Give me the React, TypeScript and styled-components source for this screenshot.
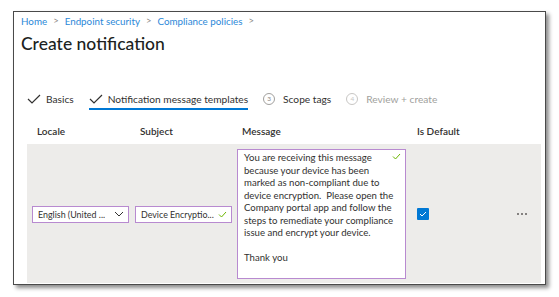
import React from 'react';
import styled, { createGlobalStyle } from 'styled-components';

const GlobalStyle = createGlobalStyle`
  body {
    margin: 0;
    background: #ffffff;
    font-family: Lato, 'Open Sans', sans-serif;
    color: #323130;
  }
`;

const Page = styled.div`
  width: 559px;
  height: 297px;
  padding: 11px 0 0 13px;
  box-sizing: border-box;
`;

const Frame = styled.div`
  width: 533px;
  height: 274px;
  box-sizing: border-box;
  border: 1.5px solid #4a4a4a;
  box-shadow: 3px 3px 4px rgba(0, 0, 0, 0.45);
  background: #ffffff;
  padding: 2px 4px 0 0;
  display: flex;
  flex-direction: column;
`;

const Breadcrumb = styled.div`
  display: flex;
  align-items: center;
  gap: 6px;
  padding-left: 7px;
  font-size: 9.8px;
  line-height: 14px;
`;

const Crumb = styled.span`
  color: #2b88d8;
`;

const Sep = styled.span`
  color: #8a8886;
  font-size: 9.5px;
`;

const Title = styled.h1`
  margin: 4px 0 0 7px;
  font-size: 17.5px;
  line-height: 24px;
  font-weight: 500;
  color: #201f1e;
`;

const Tabs = styled.div`
  display: flex;
  align-items: flex-start;
  margin: 35px 0 0 13px;
`;

const Tab = styled.div<{ $active?: boolean; $muted?: boolean }>`
  display: flex;
  align-items: center;
  gap: 5px;
  margin-right: 15px;
  font-size: 10.2px;
  line-height: 16px;
  padding-bottom: 1px;
  border-bottom: 2px solid ${({ $active }) => ($active ? '#0078d4' : 'transparent')};
  color: ${({ $muted }) => ($muted ? '#a19f9d' : '#323130')};
`;

const StepNum = styled.span<{ $muted?: boolean }>`
  width: 10px;
  height: 10px;
  border-radius: 50%;
  border: 1px solid ${({ $muted }) => ($muted ? '#c8c6c4' : '#a19f9d')};
  color: ${({ $muted }) => ($muted ? '#c8c6c4' : '#8a8886')};
  font-size: 6.5px;
  line-height: 10px;
  text-align: center;
  margin-right: 3px;
`;

const Grid = styled.div`
  display: grid;
  grid-template-columns: 103px 102px 180px 1fr 24px;
  margin-left: 13px;
  padding-left: 5px;
`;

const HeadRow = styled(Grid)`
  margin-top: 14px;
  padding-bottom: 6px;
`;

const HeadCell = styled.div<{ $flush?: boolean }>`
  font-size: 10px;
  line-height: 14px;
  font-weight: 600;
  color: #323130;
  padding-left: ${({ $flush }) => ($flush ? '0' : '5px')};
`;

const DataRow = styled(Grid)`
  background: #edecea;
  align-items: center;
  padding-top: 5px;
  padding-bottom: 4px;
`;

const Field = styled.div`
  width: 97px;
  height: 17px;
  box-sizing: border-box;
  border: 1.5px solid #b88ad0;
  background: #ffffff;
  display: flex;
  align-items: center;
  justify-content: space-between;
  gap: 2px;
  padding: 0 4px 0 5px;
  font-size: 8.9px;
  color: #323130;
  white-space: nowrap;

  svg {
    flex-shrink: 0;
  }
`;

const FieldText = styled.span`
  overflow: hidden;
`;

const MessageBox = styled.div`
  position: relative;
  width: 169px;
  height: 130px;
  box-sizing: border-box;
  border: 1.5px solid #b88ad0;
  background: #ffffff;
  padding: 2px 6px 0 6px;
  font-size: 9.6px;
  line-height: 12.5px;
  color: #323130;
  white-space: pre-wrap;
`;

const BoxCheck = styled.span`
  position: absolute;
  top: 3px;
  right: 4px;
  display: flex;
`;

const Checkbox = styled.div`
  width: 12px;
  height: 12px;
  background: #0078d4;
  border-radius: 1px;
  display: flex;
  align-items: center;
  justify-content: center;
`;

const More = styled.div`
  display: flex;
  gap: 2px;
  align-items: center;
`;

const Dot = styled.span`
  width: 2px;
  height: 2px;
  border-radius: 50%;
  background: #605e5c;
`;

const TabCheck = () => (
  <svg width="14" height="10" viewBox="0 0 14 10">
    <polyline points="1,5 5,9 13,1" fill="none" stroke="#323130" strokeWidth="1.2" />
  </svg>
);

const GreenCheck = () => (
  <svg width="9" height="7" viewBox="0 0 9 7">
    <polyline points="1,3.5 3.5,6 8,1" fill="none" stroke="#6bb700" strokeWidth="1" />
  </svg>
);

const Chevron = () => (
  <svg width="10" height="6" viewBox="0 0 10 6">
    <polyline points="1,1 5,5 9,1" fill="none" stroke="#323130" strokeWidth="1" />
  </svg>
);

const message =
  'You are receiving this message because your device has been marked as non-compliant due to device encryption.  Please open the Company portal app and follow the steps to remediate your compliance issue and encrypt your device.\n\nThank you';

export default function App() {
  return (
    <Page>
      <GlobalStyle />
      <Frame>
        <Breadcrumb>
          <Crumb>Home</Crumb>
          <Sep>&gt;</Sep>
          <Crumb>Endpoint security</Crumb>
          <Sep>&gt;</Sep>
          <Crumb>Compliance policies</Crumb>
          <Sep>&gt;</Sep>
        </Breadcrumb>
        <Title>Create notification</Title>

        <Tabs>
          <Tab>
            <TabCheck />
            Basics
          </Tab>
          <Tab $active>
            <TabCheck />
            Notification message templates
          </Tab>
          <Tab>
            <StepNum>3</StepNum>
            Scope tags
          </Tab>
          <Tab $muted>
            <StepNum $muted>4</StepNum>
            Review + create
          </Tab>
        </Tabs>

        <HeadRow>
          <HeadCell>Locale</HeadCell>
          <HeadCell>Subject</HeadCell>
          <HeadCell>Message</HeadCell>
          <HeadCell $flush>Is Default</HeadCell>
          <div />
        </HeadRow>

        <DataRow>
          <Field>
            <FieldText>English (United ...</FieldText>
            <Chevron />
          </Field>
          <Field>
            <FieldText>Device Encryptio...</FieldText>
            <GreenCheck />
          </Field>
          <MessageBox>
            {message}
            <BoxCheck>
              <GreenCheck />
            </BoxCheck>
          </MessageBox>
          <Checkbox>
            <svg width="8" height="6" viewBox="0 0 8 6">
              <polyline points="1,3 3,5 7,1" fill="none" stroke="#ffffff" strokeWidth="1" />
            </svg>
          </Checkbox>
          <More>
            <Dot />
            <Dot />
            <Dot />
          </More>
        </DataRow>
      </Frame>
    </Page>
  );
}
